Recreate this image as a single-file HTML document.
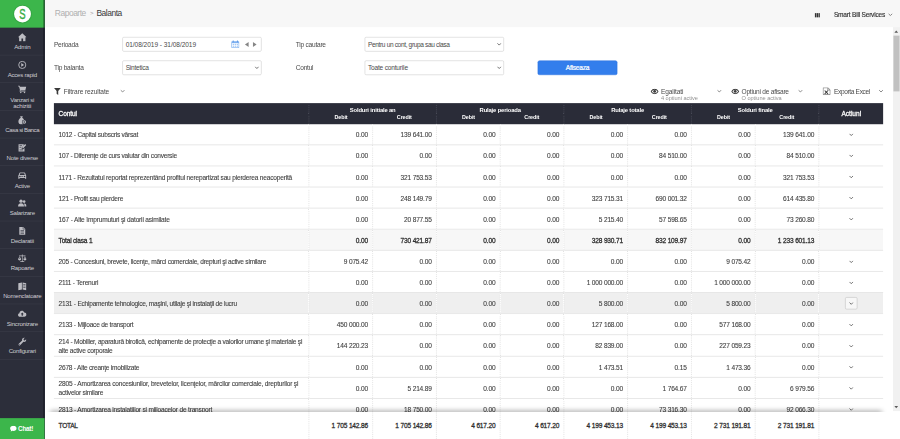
<!DOCTYPE html>
<html lang="ro">
<head>
<meta charset="utf-8">
<title>Balanta - Smart Bill</title>
<style>
html,body{margin:0;padding:0;width:900px;height:439px;overflow:hidden;background:#fff;}
#app{position:absolute;left:0;top:0;width:1920px;height:937px;transform:scale(0.46875);transform-origin:0 0;font-family:"Liberation Sans",sans-serif;font-size:14px;color:#454545;overflow:hidden;}
#side{position:absolute;left:0;top:0;width:95px;height:937px;background:#2c2e3a;}
#side:after{content:"";position:absolute;right:0;top:0;width:3px;height:892px;background:rgba(0,0,10,0.32);}
#logo{position:absolute;left:0;top:0;width:95px;height:59px;background:#3cb64b;}
#logo .circ{position:absolute;left:30px;top:11.5px;width:36px;height:36px;border-radius:50%;background:#fff;box-shadow:0 0 0 2px #33a643;color:#36ad45;font-weight:normal;font-size:29px;line-height:35px;text-align:center;-webkit-text-stroke:0.8px #36ad45;}
#logo .circ span{display:inline-block;transform:scale(0.7,1.1);}
#nav{position:absolute;left:0;top:59px;width:95px;}
.sitem{position:relative;height:58px;border-bottom:1px solid #3e404c;text-align:center;color:#cdcdd2;font-size:13px;letter-spacing:-0.5px;}
.sitem .ico{position:absolute;left:38px;top:11px;width:19px;height:19px;display:block;}
.sitem .ico svg{width:19px;height:19px;display:block;}
.sitem .lbl{position:absolute;left:0;width:95px;top:34px;line-height:15px;white-space:nowrap;}
.sitem.two .ico{top:4px;}
.sitem.two .lbl{top:30.5px;line-height:12px;}
#chat{position:absolute;left:0;top:892px;width:95px;height:45px;background:#3cb64b;color:#fff;font-weight:bold;font-size:13.5px;line-height:45px;text-align:center;letter-spacing:-0.5px;text-indent:-4px;}
#chat svg{width:15px;height:13px;vertical-align:-2px;margin-right:3px;}
#top{position:absolute;left:95px;top:0;width:1825px;height:58px;background:#f7f7f7;}
#crumb{position:absolute;left:22px;top:0;line-height:56px;font-size:18px;color:#b0b0b0;white-space:nowrap;letter-spacing:-1px;}
#crumb b{font-weight:normal;color:#3a3a3a;}
#crumb i{font-style:normal;font-size:13px;margin:0 7px 0 9px;color:#9a9a9a;position:relative;top:-1px;}
#acct{position:absolute;right:15px;top:0;line-height:62px;font-size:14px;color:#333;white-space:nowrap;letter-spacing:-0.45px;-webkit-text-stroke:0.3px #333;}
#acct .chev{width:11px;height:7px;margin-left:6px;color:#666;vertical-align:1px;}
#acct .flag{display:inline-block;width:11px;height:9px;margin-right:30px;vertical-align:-1px;background:linear-gradient(90deg,#333 0 3px,#888 3px 5px,#333 5px 8px,#888 8px 9px,#333 9px 11px);}
#sb{position:absolute;left:1904.5px;top:58px;width:16px;height:819px;background:#f1f1f1;}
#sb .thumb{position:absolute;left:1.5px;top:18px;width:12.5px;height:119px;background:#c1c1c1;}
#sb .up{position:absolute;left:3.5px;top:7px;width:0;height:0;border:4.5px solid transparent;border-top:0;border-bottom:5px solid #5a5a5a;}
#sb .dn{position:absolute;left:3.5px;bottom:6px;width:0;height:0;border:4.5px solid transparent;border-bottom:0;border-top:5px solid #5a5a5a;}
.flabel{position:absolute;font-size:14px;line-height:30px;color:#4a4a4a;letter-spacing:-0.5px;white-space:nowrap;}
.finput{position:absolute;box-sizing:border-box;width:297px;height:31px;border:1px solid #c4c4c4;border-radius:3px;background:#fff;font-size:14px;line-height:31px;padding-left:6px;color:#4a4a4a;letter-spacing:-0.5px;white-space:nowrap;}
.finput .chev{position:absolute;right:4px;top:10.5px;width:10px;height:7px;color:#444;}
#btn{position:absolute;box-sizing:border-box;left:1147px;top:129px;width:170px;height:30.5px;border-radius:4px;background:#337eec;border:1px solid #2a70de;color:#fff;font-weight:normal;-webkit-text-stroke:0.5px #fff;font-size:14px;line-height:29px;text-align:center;letter-spacing:-0.45px;}
.tool{position:absolute;top:186px;font-size:14px;line-height:18px;color:#4a4a4a;white-space:nowrap;letter-spacing:-0.5px;}
.tool small{display:block;font-size:12px;line-height:12px;color:#929292;letter-spacing:-0.08px;margin-top:-1px;}
.tchev{position:absolute;top:191px;width:11px;height:7px;color:#555;}
.chev{display:inline-block;width:11px;height:7px;}
#tbl{position:absolute;left:115px;top:220px;width:1769px;border-collapse:collapse;table-layout:fixed;}
#tbl th{background:transparent;color:#fff;font-weight:bold;padding:0;}
#tbl thead tr.g th{height:22px;font-size:12.5px;line-height:14px;vertical-align:bottom;letter-spacing:-0.35px;border-left:2px dotted #484a56;}
#tbl thead tr.s th{height:20.5px;font-size:11.5px;line-height:13px;vertical-align:top;padding-top:2px;letter-spacing:-0.25px;}
#tbl thead tr.s th.gl{border-left:2px dotted #484a56;}
#tbl thead tr.g th.h1{font-size:14px;text-align:left;padding-left:10px;vertical-align:middle;letter-spacing:-0.3px;border-left:0;font-weight:normal;-webkit-text-stroke:0.55px #fff;}
#tbl thead tr.g th.h9{font-size:14px;vertical-align:middle;letter-spacing:0;font-weight:normal;-webkit-text-stroke:0.55px #fff;}
#tbl td{height:40.1px;padding:3px 10px 0;border-bottom:2px solid #e6e6e6;border-left:2px dotted #e2e2e2;font-size:14px;line-height:18px;letter-spacing:-0.5px;color:#3e3e3e;-webkit-text-stroke:0.2px #3e3e3e;overflow:hidden;white-space:nowrap;}
#tbl td.c{border-left:0;text-align:left;}
#tbl td.n{text-align:right;letter-spacing:-0.36px;padding-right:9px;}
#tbl tr.two td.c{padding-top:2px;height:41.1px;}
#tbl td.a{text-align:center;color:#444;padding-top:0;height:43.1px;}
#tbl td.a .chev{width:10px;height:7px;}
#tbl tr.tot td{background:#f7f7f7;font-weight:normal;color:#2e2e2e;-webkit-text-stroke:0.55px #2e2e2e;letter-spacing:-0.35px;}
#tbl tr.tot td.c{letter-spacing:-0.45px;}
#tbl tr.hov td{background:#efefef;}
.abtn{display:inline-block;box-sizing:border-box;width:26px;height:26px;border:1px solid #b8b8b8;border-radius:3px;background:#f7f7f7;line-height:22px;vertical-align:middle;}
#hdrbg{position:absolute;left:115px;top:220px;width:1769px;height:44.5px;background:#2a2c38;}
#foot{position:absolute;left:115px;top:878px;width:1769px;height:60px;background:#fff;}
#fshadow{position:absolute;left:108px;top:878px;width:1773px;height:8px;box-shadow:0 -1px 12px rgba(0,0,0,0.4);}
#foot table{width:1769px;border-collapse:collapse;table-layout:fixed;}
#foot td{height:58px;padding:0 10px 0;font-weight:normal;-webkit-text-stroke:0.55px #2e2e2e;font-size:14px;letter-spacing:-0.35px;color:#2e2e2e;white-space:nowrap;border-left:2px dotted #e2e2e2;}
#foot td.c{border-left:0;}
#foot td.n{text-align:right;padding-right:9px;}
#footmask{position:absolute;left:95px;top:878px;width:1825px;height:60px;background:#fff;}
</style>
</head>
<body>
<div id="app">
  <div id="top">
    <div id="crumb">Rapoarte<i>&gt;</i><b>Balanta</b></div>
    <div id="acct"><span class="flag"></span>Smart Bill Services<svg class="chev" viewBox="0 0 12 8"><path d="M1.5 1.5 L6 6 L10.5 1.5" fill="none" stroke="currentColor" stroke-width="1.9"/></svg></div>
  </div>

  <div id="main">
    <div class="flabel" style="left:115px;top:80px">Perioada</div>
    <div class="finput" style="left:261px;top:79px;letter-spacing:-0.1px">01/08/2019 - 31/08/2019
      <svg style="position:absolute;left:231px;top:6px;width:18px;height:17px" viewBox="0 0 18 17"><rect x="0.5" y="2" width="17" height="14.5" rx="1.5" fill="#7db0f0"/><rect x="2" y="6" width="14" height="9" fill="#fff"/><rect x="3.5" y="0" width="2" height="4" fill="#5a96e6"/><rect x="12.5" y="0" width="2" height="4" fill="#5a96e6"/><g fill="#7db0f0"><rect x="3.5" y="7.5" width="2.5" height="2"/><rect x="7.7" y="7.5" width="2.5" height="2"/><rect x="12" y="7.5" width="2.5" height="2"/><rect x="3.5" y="11.5" width="2.5" height="2"/><rect x="7.7" y="11.5" width="2.5" height="2"/><rect x="12" y="11.5" width="2.5" height="2"/></g></svg>
      <svg style="position:absolute;left:260px;top:9px;width:9px;height:12px" viewBox="0 0 9 12"><path d="M8.5 0.5 V11.5 L0.5 6 Z" fill="#858585"/></svg>
      <svg style="position:absolute;left:277px;top:9px;width:9px;height:12px" viewBox="0 0 9 12"><path d="M0.5 0.5 V11.5 L8.5 6 Z" fill="#858585"/></svg>
    </div>
    <div class="flabel" style="left:115px;top:129px">Tip balanta</div>
    <div class="finput" style="left:261px;top:129px">Sintetica<svg class="chev" viewBox="0 0 12 8"><path d="M1.5 1.5 L6 6 L10.5 1.5" fill="none" stroke="currentColor" stroke-width="1.9"/></svg></div>

    <div class="flabel" style="left:631px;top:80px">Tip cautare</div>
    <div class="finput" style="left:778px;top:79px;letter-spacing:-0.76px">Pentru un cont, grupa sau clasa<svg class="chev" viewBox="0 0 12 8"><path d="M1.5 1.5 L6 6 L10.5 1.5" fill="none" stroke="currentColor" stroke-width="1.9"/></svg></div>
    <div class="flabel" style="left:631px;top:129px">Contul</div>
    <div class="finput" style="left:778px;top:129px;letter-spacing:-0.4px">Toate conturile<svg class="chev" viewBox="0 0 12 8"><path d="M1.5 1.5 L6 6 L10.5 1.5" fill="none" stroke="currentColor" stroke-width="1.9"/></svg></div>
    <div id="btn">Afiseaza</div>

    <div class="tool" style="left:115px;letter-spacing:-0.24px"><svg style="width:15px;height:16px;vertical-align:-3px;margin-right:6px" viewBox="0 0 15 16"><path d="M0.3 0.5 H14.7 L9.2 7 V15.5 L5.8 13 V7 Z" fill="#3a3a3a"/></svg>Filtrare rezultate</div>
    <svg class="tchev" style="left:256px" viewBox="0 0 12 8"><path d="M1.5 1.5 L6 6 L10.5 1.5" fill="none" stroke="currentColor" stroke-width="1.7"/></svg>

    <div class="tool" style="left:1388px;letter-spacing:-0.2px"><svg style="width:17px;height:12px;vertical-align:-1px;margin-right:5px" viewBox="0 0 17 12"><path d="M1 6 C3.4 2.3 6 1.2 8.5 1.2 C11 1.2 13.6 2.3 16 6 C13.6 9.7 11 10.8 8.5 10.8 C6 10.8 3.4 9.7 1 6 Z" fill="none" stroke="#3c3c3c" stroke-width="2.2"/><circle cx="8.5" cy="6" r="3" fill="#3c3c3c"/></svg>Egalitati<small style="margin-left:22px">4 optiuni active</small></div>
    <svg class="tchev" style="left:1529px" viewBox="0 0 12 8"><path d="M1.5 1.5 L6 6 L10.5 1.5" fill="none" stroke="currentColor" stroke-width="1.7"/></svg>

    <div class="tool" style="left:1560px"><svg style="width:17px;height:12px;vertical-align:-1px;margin-right:5px" viewBox="0 0 17 12"><path d="M1 6 C3.4 2.3 6 1.2 8.5 1.2 C11 1.2 13.6 2.3 16 6 C13.6 9.7 11 10.8 8.5 10.8 C6 10.8 3.4 9.7 1 6 Z" fill="none" stroke="#3c3c3c" stroke-width="2.2"/><circle cx="8.5" cy="6" r="3" fill="#3c3c3c"/></svg>Optiuni de afisare<small style="margin-left:22px">O optiune activa</small></div>
    <svg class="tchev" style="left:1702px" viewBox="0 0 12 8"><path d="M1.5 1.5 L6 6 L10.5 1.5" fill="none" stroke="currentColor" stroke-width="1.7"/></svg>

    <div class="tool" style="left:1754px;letter-spacing:-0.73px"><svg style="width:17px;height:17px;vertical-align:-3px;margin-right:7px;margin-left:1px" viewBox="0 0 18 17"><path d="M1 0.8 H12 L17 5.6 V16.2 H1 Z" fill="#fff" stroke="#555" stroke-width="1.4"/><path d="M11.6 1 V6 H16.8" fill="none" stroke="#555" stroke-width="1.2"/><path d="M4.6 7 L12 14.6 M12 7 L4.6 14.6" stroke="#3a3a3a" stroke-width="2.3" fill="none"/></svg>Exporta Excel</div>
    <svg class="tchev" style="left:1874px" viewBox="0 0 12 8"><path d="M1.5 1.5 L6 6 L10.5 1.5" fill="none" stroke="currentColor" stroke-width="1.7"/></svg>

    <div id="hdrbg"></div>
    <table id="tbl">
      <colgroup><col style="width:544px"><col style="width:136px"><col style="width:136px"><col style="width:136px"><col style="width:136px"><col style="width:136px"><col style="width:136px"><col style="width:136px"><col style="width:136px"><col style="width:137px"></colgroup>
      <thead>
        <tr class="g"><th class="h1" rowspan="2">Contul</th><th colspan="2">Solduri initiale an</th><th colspan="2">Rulaje perioada</th><th colspan="2">Rulaje totale</th><th colspan="2">Solduri finale</th><th class="h9" rowspan="2">Actiuni</th></tr>
        <tr class="s"><th class="gl">Debit</th><th>Credit</th><th class="gl">Debit</th><th>Credit</th><th class="gl">Debit</th><th>Credit</th><th class="gl">Debit</th><th>Credit</th></tr>
      </thead>
      <tbody>
<tr><td class="c">1012 - Capital subscris vărsat</td><td class="n">0.00</td><td class="n">139 641.00</td><td class="n">0.00</td><td class="n">0.00</td><td class="n">0.00</td><td class="n">0.00</td><td class="n">0.00</td><td class="n">139 641.00</td><td class="a"><svg class="chev" viewBox="0 0 12 8"><path d="M1.5 1.5 L6 6 L10.5 1.5" fill="none" stroke="currentColor" stroke-width="1.9"/></svg></td></tr>
<tr><td class="c">107 - Diferenţe de curs valutar din conversie</td><td class="n">0.00</td><td class="n">0.00</td><td class="n">0.00</td><td class="n">0.00</td><td class="n">0.00</td><td class="n">84 510.00</td><td class="n">0.00</td><td class="n">84 510.00</td><td class="a"><svg class="chev" viewBox="0 0 12 8"><path d="M1.5 1.5 L6 6 L10.5 1.5" fill="none" stroke="currentColor" stroke-width="1.9"/></svg></td></tr>
<tr><td class="c"><span style="letter-spacing:-0.41px">1171 - Rezultatul reportat reprezentând profitul nerepartizat sau pierderea neacoperită</span></td><td class="n">0.00</td><td class="n">321 753.53</td><td class="n">0.00</td><td class="n">0.00</td><td class="n">0.00</td><td class="n">0.00</td><td class="n">0.00</td><td class="n">321 753.53</td><td class="a"><svg class="chev" viewBox="0 0 12 8"><path d="M1.5 1.5 L6 6 L10.5 1.5" fill="none" stroke="currentColor" stroke-width="1.9"/></svg></td></tr>
<tr><td class="c">121 - Profit sau pierdere</td><td class="n">0.00</td><td class="n">248 149.79</td><td class="n">0.00</td><td class="n">0.00</td><td class="n">323 715.31</td><td class="n">690 001.32</td><td class="n">0.00</td><td class="n">614 435.80</td><td class="a"><svg class="chev" viewBox="0 0 12 8"><path d="M1.5 1.5 L6 6 L10.5 1.5" fill="none" stroke="currentColor" stroke-width="1.9"/></svg></td></tr>
<tr><td class="c"><span style="letter-spacing:-0.37px">167 - Alte împrumuturi şi datorii asimilate</span></td><td class="n">0.00</td><td class="n">20 877.55</td><td class="n">0.00</td><td class="n">0.00</td><td class="n">5 215.40</td><td class="n">57 598.65</td><td class="n">0.00</td><td class="n">73 260.80</td><td class="a"><svg class="chev" viewBox="0 0 12 8"><path d="M1.5 1.5 L6 6 L10.5 1.5" fill="none" stroke="currentColor" stroke-width="1.9"/></svg></td></tr>
<tr class="tot"><td class="c">Total clasa 1</td><td class="n">0.00</td><td class="n">730 421.87</td><td class="n">0.00</td><td class="n">0.00</td><td class="n">328 930.71</td><td class="n">832 109.97</td><td class="n">0.00</td><td class="n">1 233 601.13</td><td class="a"></td></tr>
<tr><td class="c">205 - Concesiuni, brevete, licenţe, mărci comerciale, drepturi şi active similare</td><td class="n">9 075.42</td><td class="n">0.00</td><td class="n">0.00</td><td class="n">0.00</td><td class="n">0.00</td><td class="n">0.00</td><td class="n">9 075.42</td><td class="n">0.00</td><td class="a"><svg class="chev" viewBox="0 0 12 8"><path d="M1.5 1.5 L6 6 L10.5 1.5" fill="none" stroke="currentColor" stroke-width="1.9"/></svg></td></tr>
<tr><td class="c">2111 - Terenuri</td><td class="n">0.00</td><td class="n">0.00</td><td class="n">0.00</td><td class="n">0.00</td><td class="n">1 000 000.00</td><td class="n">0.00</td><td class="n">1 000 000.00</td><td class="n">0.00</td><td class="a"><svg class="chev" viewBox="0 0 12 8"><path d="M1.5 1.5 L6 6 L10.5 1.5" fill="none" stroke="currentColor" stroke-width="1.9"/></svg></td></tr>
<tr class="hov"><td class="c">2131 - Echipamente tehnologice, maşini, utilaje şi instalaţii de lucru</td><td class="n">0.00</td><td class="n">0.00</td><td class="n">0.00</td><td class="n">0.00</td><td class="n">5 800.00</td><td class="n">0.00</td><td class="n">5 800.00</td><td class="n">0.00</td><td class="a"><span class="abtn"><svg class="chev" viewBox="0 0 12 8"><path d="M1.5 1.5 L6 6 L10.5 1.5" fill="none" stroke="currentColor" stroke-width="1.9"/></svg></span></td></tr>
<tr><td class="c">2133 - Mijloace de transport</td><td class="n">450 000.00</td><td class="n">0.00</td><td class="n">0.00</td><td class="n">0.00</td><td class="n">127 168.00</td><td class="n">0.00</td><td class="n">577 168.00</td><td class="n">0.00</td><td class="a"><svg class="chev" viewBox="0 0 12 8"><path d="M1.5 1.5 L6 6 L10.5 1.5" fill="none" stroke="currentColor" stroke-width="1.9"/></svg></td></tr>
<tr class="two"><td class="c">214 - Mobilier, aparatură birotică, echipamente de protecţie a valorilor umane şi materiale şi<br>alte active corporale</td><td class="n">144 220.23</td><td class="n">0.00</td><td class="n">0.00</td><td class="n">0.00</td><td class="n">82 839.00</td><td class="n">0.00</td><td class="n">227 059.23</td><td class="n">0.00</td><td class="a"><svg class="chev" viewBox="0 0 12 8"><path d="M1.5 1.5 L6 6 L10.5 1.5" fill="none" stroke="currentColor" stroke-width="1.9"/></svg></td></tr>
<tr><td class="c">2678 - Alte creanţe imobilizate</td><td class="n">0.00</td><td class="n">0.00</td><td class="n">0.00</td><td class="n">0.00</td><td class="n">1 473.51</td><td class="n">0.15</td><td class="n">1 473.36</td><td class="n">0.00</td><td class="a"><svg class="chev" viewBox="0 0 12 8"><path d="M1.5 1.5 L6 6 L10.5 1.5" fill="none" stroke="currentColor" stroke-width="1.9"/></svg></td></tr>
<tr class="two"><td class="c"><span style="letter-spacing:-0.41px">2805 - Amortizarea concesiunilor, brevetelor, licenţelor, mărcilor comerciale, drepturilor şi</span><br>activelor similare</td><td class="n">0.00</td><td class="n">5 214.89</td><td class="n">0.00</td><td class="n">0.00</td><td class="n">0.00</td><td class="n">1 764.67</td><td class="n">0.00</td><td class="n">6 979.56</td><td class="a"><svg class="chev" viewBox="0 0 12 8"><path d="M1.5 1.5 L6 6 L10.5 1.5" fill="none" stroke="currentColor" stroke-width="1.9"/></svg></td></tr>
<tr><td class="c"><span style="letter-spacing:-0.4px">2813 - Amortizarea instalatiilor si mijloacelor de transport</span></td><td class="n">0.00</td><td class="n">18 750.00</td><td class="n">0.00</td><td class="n">0.00</td><td class="n">0.00</td><td class="n">73 316.30</td><td class="n">0.00</td><td class="n">92 066.30</td><td class="a"><svg class="chev" viewBox="0 0 12 8"><path d="M1.5 1.5 L6 6 L10.5 1.5" fill="none" stroke="currentColor" stroke-width="1.9"/></svg></td></tr>
      </tbody>
    </table>
  </div>

  <div id="sb"><span class="up"></span><div class="thumb"></div><span class="dn"></span></div>
  <div id="fshadow"></div>
  <div id="footmask"></div>
  <div id="foot"><table><colgroup><col style="width:544px"><col style="width:136px"><col style="width:136px"><col style="width:136px"><col style="width:136px"><col style="width:136px"><col style="width:136px"><col style="width:136px"><col style="width:136px"><col style="width:137px"></colgroup><tr><td class="c" style="letter-spacing:-0.7px">TOTAL</td><td class="n">1 705 142.86</td><td class="n">1 705 142.86</td><td class="n">4 617.20</td><td class="n">4 617.20</td><td class="n">4 199 453.13</td><td class="n">4 199 453.13</td><td class="n">2 731 191.81</td><td class="n">2 731 191.81</td><td class="a"></td></tr></table></div>

  <div id="side">
    <div id="logo"><div class="circ"><span>S</span></div></div>
    <div id="nav">
<div class="sitem"><span class="ico"><svg viewBox="0 0 18 18"><path d="M9 0.8 L0.3 9 H2.6 V17 H7.3 V11.6 H10.7 V17 H15.4 V9 H17.7 Z" fill="#bcbcc2"/></svg></span><span class="lbl">Admin</span></div>
<div class="sitem"><span class="ico"><svg viewBox="0 0 18 18"><circle cx="9" cy="9" r="7.2" fill="none" stroke="#bcbcc2" stroke-width="1.8"/><path d="M7 5.3 L12.6 9 L7 12.7 Z" fill="#bcbcc2"/></svg></span><span class="lbl">Acces rapid</span></div>
<div class="sitem two"><span class="ico"><svg viewBox="0 0 18 18"><path d="M0.5 2 H3.6 L4.3 4 H17 L15.2 10.8 H5.6 L5.2 12 H15.5 V13.4 H3.4 L4.3 10.6 L2.5 3.4 H0.5 Z" fill="#bcbcc2"/><circle cx="6" cy="15.5" r="1.5" fill="#bcbcc2"/><circle cx="13.5" cy="15.5" r="1.5" fill="#bcbcc2"/></svg></span><span class="lbl">Vanzari si<br>achizitii</span></div>
<div class="sitem"><span class="ico"><svg viewBox="0 0 18 18"><path d="M4.6 0.8 H10.2 L8.8 4 C11.8 5.8 13.4 8.8 13.4 12 C13.4 15.4 11.4 17.2 7.4 17.2 C3.4 17.2 1.2 15.4 1.2 12 C1.2 8.8 2.8 5.8 6 4 Z" fill="#bcbcc2"/><circle cx="13" cy="12.6" r="4.8" fill="#2c2e3a"/><circle cx="13" cy="12.6" r="3.7" fill="#bcbcc2"/><circle cx="13" cy="12.6" r="1.5" fill="#2c2e3a"/></svg></span><span class="lbl"><span style="letter-spacing:-0.9px">Casa si Banca</span></span></div>
<div class="sitem"><span class="ico"><svg viewBox="0 0 18 18"><path d="M1.5 1.5 H12 V4 L8 8.5 V11.5 H11 L13.5 9 V16.5 H1.5 Z" fill="#bcbcc2"/><path d="M14.8 1.2 L17 3.4 L11 9.6 H9.2 V7.4 Z" fill="#bcbcc2"/><rect x="3.5" y="4" width="5" height="1.3" fill="#2c2e3a"/><rect x="3.5" y="7" width="3.5" height="1.3" fill="#2c2e3a"/><rect x="3.5" y="12.5" width="7" height="1.3" fill="#2c2e3a"/></svg></span><span class="lbl">Note diverse</span></div>
<div class="sitem"><span class="ico"><svg viewBox="0 0 18 18"><path d="M4.6 2.6 H13.4 C14.2 2.6 14.6 3 14.9 3.8 L16 7.4 C16.8 7.8 17 8.5 17 9.5 V15.4 H14.4 V13.8 H3.6 V15.4 H1 V9.5 C1 8.5 1.2 7.8 2 7.4 L3.1 3.8 C3.4 3 3.8 2.6 4.6 2.6 Z M5 4.2 L3.9 7.8 H14.1 L13 4.2 Z" fill="#bcbcc2" fill-rule="evenodd"/><circle cx="4.3" cy="10.7" r="1.5" fill="#2c2e3a"/><circle cx="13.7" cy="10.7" r="1.5" fill="#2c2e3a"/><rect x="7" y="10.2" width="4" height="1.2" fill="#2c2e3a"/></svg></span><span class="lbl">Active</span></div>
<div class="sitem"><span class="ico"><svg viewBox="0 0 18 18"><circle cx="6.5" cy="5" r="3.3" fill="#bcbcc2"/><path d="M0.5 15.5 C0.5 11 3 9.3 6.5 9.3 C10 9.3 12.5 11 12.5 15.5 Z" fill="#bcbcc2"/><circle cx="12.8" cy="5.8" r="2.6" fill="#bcbcc2"/><path d="M13.5 15.5 C13.5 12.5 13 11 11.8 9.7 C15.5 9.2 17.5 11 17.5 15.5 Z" fill="#bcbcc2"/></svg></span><span class="lbl">Salarizare</span></div>
<div class="sitem"><span class="ico"><svg viewBox="0 0 18 18"><path d="M3 1 H11 L15 5 V17 H3 Z" fill="#bcbcc2"/><path d="M10.5 1.5 V5.5 H14.5" fill="none" stroke="#2c2e3a" stroke-width="1"/><rect x="5.5" y="8" width="7" height="1.2" fill="#2c2e3a"/><rect x="5.5" y="10.6" width="7" height="1.2" fill="#2c2e3a"/><rect x="5.5" y="13.2" width="7" height="1.2" fill="#2c2e3a"/></svg></span><span class="lbl">Declaratii</span></div>
<div class="sitem"><span class="ico"><svg viewBox="0 0 18 18"><path d="M8.3 1 H9.7 V3 H15.5 V4.4 H9.7 V14.5 H13 V16 H5 V14.5 H8.3 V4.4 H2.5 V3 H8.3 Z" fill="#bcbcc2"/><path d="M3.6 4.5 L6.6 10 H0.6 Z M3.6 6.6 L2.4 9 H4.8 Z" fill="#bcbcc2" fill-rule="evenodd"/><path d="M0.6 10 H6.6 C6.6 12 5.3 12.8 3.6 12.8 C1.9 12.8 0.6 12 0.6 10 Z" fill="#bcbcc2"/><path d="M14.4 4.5 L17.4 10 H11.4 Z M14.4 6.6 L13.2 9 H15.6 Z" fill="#bcbcc2" fill-rule="evenodd"/><path d="M11.4 10 H17.4 C17.4 12 16.1 12.8 14.4 12.8 C12.7 12.8 11.4 12 11.4 10 Z" fill="#bcbcc2"/></svg></span><span class="lbl">Rapoarte</span></div>
<div class="sitem"><span class="ico"><svg viewBox="0 0 18 18"><path d="M1 3 L8.3 1.5 V15.5 L1 17 Z" fill="#bcbcc2"/><path d="M9.7 1.5 L17 3 V17 L9.7 15.5 Z" fill="#bcbcc2"/><rect x="11" y="5" width="4.5" height="1.2" fill="#2c2e3a"/><rect x="11" y="8" width="4.5" height="1.2" fill="#2c2e3a"/><rect x="11" y="11" width="4.5" height="1.2" fill="#2c2e3a"/></svg></span><span class="lbl">Nomenclatoare</span></div>
<div class="sitem"><span class="ico"><svg viewBox="0 0 18 18"><path d="M4.5 15 C2 15 0.5 13.3 0.5 11.3 C0.5 9.5 1.7 8.2 3.3 7.8 C3.3 4.8 5.5 3 8.2 3 C10.4 3 12.2 4.2 12.9 6.2 C15.5 6.2 17.5 8 17.5 10.6 C17.5 13.2 15.6 15 13.2 15 Z" fill="#bcbcc2"/><path d="M9 6.5 L12 10 H10.2 V13 H7.8 V10 H6 Z" fill="#2c2e3a"/></svg></span><span class="lbl">Sincronizare</span></div>
<div class="sitem"><span class="ico"><svg viewBox="0 0 18 18"><path d="M16.8 4.3 C17.3 6.2 16.7 8 15.4 9 C14.2 9.9 12.7 10.1 11.4 9.6 L4.6 16.4 C3.9 17.1 2.7 17.1 2 16.4 C1.3 15.7 1.3 14.5 2 13.8 L8.8 7 C8.3 5.7 8.5 4.2 9.4 3 C10.4 1.7 12.2 1.1 14.1 1.6 L11.5 4.2 L12 6.4 L14.2 6.9 Z" fill="#bcbcc2"/><circle cx="3.3" cy="15.1" r="0.9" fill="#2c2e3a"/></svg></span><span class="lbl">Configurari</span></div>
    </div>
    <div id="chat"><svg viewBox="0 0 17 15"><path d="M8.5 0.5 C13 0.5 16.5 3.3 16.5 6.8 C16.5 10.3 13 13 8.5 13 C7.6 13 6.8 12.9 6 12.7 C4.8 13.8 3.2 14.5 1.2 14.5 C2.2 13.5 2.8 12.4 2.9 11.3 C1.4 10.1 0.5 8.5 0.5 6.8 C0.5 3.3 4 0.5 8.5 0.5 Z" fill="#fff"/></svg>Chat!</div>
  </div>
</div>
</body>
</html>
